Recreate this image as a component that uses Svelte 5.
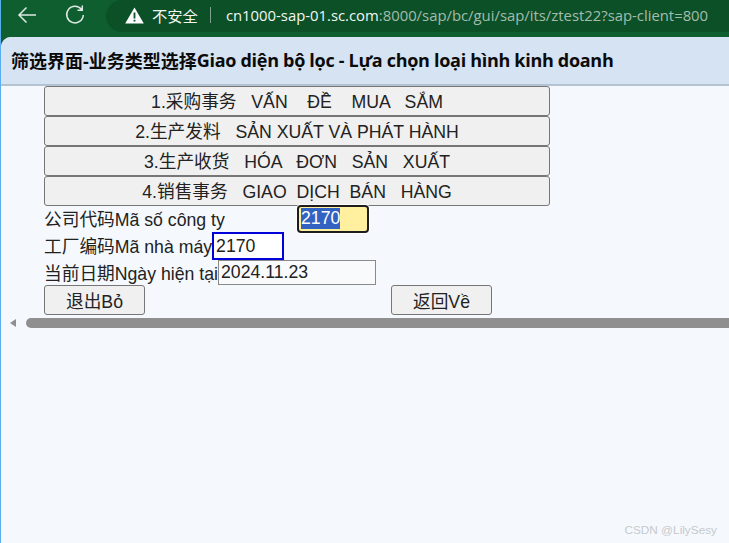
<script>
  const actions = [
    '1.采购事务   VẤN    ĐỀ    MUA   SẮM',
    '2.生产发料   SẢN XUẤT VÀ PHÁT HÀNH',
    '3.生产收货   HÓA   ĐƠN   SẢN   XUẤT',
    '4.销售事务   GIAO  DỊCH  BÁN   HÀNG'
  ];
</script>

<div class="window">
  <header class="toolbar">
    <button class="nav back" aria-label="Back">
      <svg width="22" height="22" viewBox="0 0 22 22"><path d="M20 11H3M10.500 3.500 3 11l7.500 7.500" /></svg>
    </button>
    <button class="nav reload" aria-label="Reload">
      <svg width="22" height="22" viewBox="0 0 22 22"><path d="M17.600 5.500A8.300 8.300 0 1 0 19.300 11M18.300 1.500v4.800h-4.800" /></svg>
    </button>
    <div class="address">
      <svg class="warn" width="19" height="17" viewBox="0 0 19 17">
        <path d="M9.500 .5 18.800 16.500H.2Z" fill="#fff" />
        <path d="M8.600 5.500h1.800v6h-1.800zM8.600 12.700h1.800v1.800h-1.800z" fill="#0c5027" />
      </svg>
      <span class="insecure">不安全</span>
      <span class="sep"></span>
      <span class="url">cn1000-sap-01.sc.com<span class="dim">:8000/sap/bc/gui/sap/its/ztest22?sap-client=800</span></span>
    </div>
  </header>

  <div class="page">
    <h1>筛选界面-业务类型选择<span class="vi">Giao diện bộ lọc - Lựa chọn loại hình kinh doanh</span></h1>

    <main>
      <div class="actions">
        {#each actions as action}
          <button class="action">{action}</button>
        {/each}
      </div>

      <div class="field first">
        <label for="company">公司代码Mã số công ty</label>
        <div id="company" class="focused"><span class="selected">2170</span></div>
      </div>
      <div class="field second">
        <label for="plant">工厂编码Mã nhà máy</label>
        <input id="plant" class="plant" value="2170" />
      </div>
      <div class="field third">
        <label for="date">当前日期Ngày hiện tại</label>
        <input id="date" class="date" value="2024.11.23" />
      </div>

      <div class="footer">
        <button class="small">退出Bỏ</button>
        <button class="small">返回Về</button>
      </div>
    </main>

    <div class="scrollbar">
      <span class="arrow"></span>
      <span class="thumb"></span>
    </div>

    <div class="watermark">CSDN @LilySesy</div>
  </div>
</div>

<style>
  :global(body) {
    margin: 0;
    background: #f5f9fd;
  }

  .window {
    width: 729px;
    height: 543px;
    overflow: hidden;
    display: flex;
    flex-direction: column;
    font-family: "Liberation Sans", "Noto Sans CJK SC", sans-serif;
    background: #0f5e2f;
    border-left: 1px solid #5aaef0;
    box-sizing: border-box;
  }

  .toolbar {
    height: 37px;
    flex: none;
    display: flex;
    align-items: flex-start;
    padding-left: 14px;
  }

  .nav {
    width: 24px;
    height: 30px;
    padding: 0;
    border: 0;
    background: none;
    display: flex;
    align-items: center;
    justify-content: center;
  }

  .nav svg {
    fill: none;
    stroke: #dfe9e3;
    stroke-width: 1.5;
  }

  .reload {
    margin-left: 24px;
  }

  .address {
    margin-left: 19px;
    flex: 1;
    height: 32px;
    background: #0c5027;
    border-radius: 16px 0 0 16px;
    display: flex;
    align-items: center;
    padding: 0 0 2px 19px;
    box-sizing: border-box;
    font-family: "Open Sans", "Noto Sans CJK SC", sans-serif;
    font-size: 14.850px;
    white-space: nowrap;
    color: #f2f6f3;
  }

  .insecure {
    margin-left: 8px;
    font-family: "Noto Sans CJK SC", sans-serif;
    font-size: 15.300px;
  }

  .sep {
    width: 1px;
    height: 16px;
    background: #7fa38d;
    margin: 0 15px 0 12px;
  }

  .dim {
    color: #a3bcad;
  }

  .page {
    flex: 1;
    background: #f5f9fd;
    border-radius: 10px 0 0 0;
    position: relative;
  }

  h1 {
    margin: 0;
    height: 49px;
    padding: 0 0 2px 10px;
    display: flex;
    align-items: center;
    box-sizing: border-box;
    background: #d6e3f2;
    border-bottom: 2px solid #b4c3d2;
    border-radius: 10px 0 0 0;
    font-family: "Open Sans", "Noto Sans CJK SC", sans-serif;
    font-size: 18px;
    font-weight: 700;
    color: #0b0b0b;
    white-space: nowrap;
  }

  .vi {
    letter-spacing: -0.300px;
  }

  main {
    padding: 0 0 0 43px;
    font-size: 17.700px;
    color: #222;
  }

  .actions {
    width: 506px;
    display: flex;
    flex-direction: column;
  }

  .action,
  .small {
    box-sizing: border-box;
    background: #f0f0f0;
    border: 1px solid #767676;
    border-radius: 3px;
    font: inherit;
    color: #222;
    white-space: pre;
  }

  .action {
    height: 30px;
    padding: 0 0 2px;
  }

  .field {
    display: flex;
    align-items: center;
  }

  .field label {
    padding-bottom: 2px;
  }

  .first {
    height: 26px;
  }

  .second {
    height: 28px;
  }

  .third {
    height: 25px;
  }

  .first label {
    width: 253px;
  }

  input,
  .focused {
    box-sizing: border-box;
    font: inherit;
    color: #222;
    margin: 0;
    outline: none;
  }

  .focused {
    width: 72px;
    height: 28px;
    padding: 1px 0 0 2px;
    background: #fff0a0;
    border: 2px solid #1d1d1d;
    border-radius: 4px;
    box-shadow: 0 0 0 1px #fff;
    line-height: 21px;
  }

  .selected {
    display: inline-block;
    background: #3263c2;
    color: #fff;
  }

  .plant {
    width: 72px;
    height: 28px;
    padding: 0 0 0 2px;
    background: #fff;
    border: 2px solid #0000d8;
  }

  .date {
    width: 158px;
    height: 25px;
    padding: 0 0 0 2px;
    background: #f8fafc;
    border: 1px solid #8a8a8a;
  }

  .footer {
    display: flex;
    gap: 246px;
  }

  .small {
    width: 101px;
    height: 30px;
    padding: 0;
  }

  .scrollbar {
    display: flex;
    align-items: center;
    height: 10px;
    margin-top: 3px;
  }

  .arrow {
    margin-left: 9px;
    border-style: solid;
    border-width: 4.500px 6px 4.500px 0;
    border-color: transparent #8f8f8f transparent transparent;
  }

  .thumb {
    flex: 1;
    height: 10px;
    margin-left: 10px;
    background: #8f8f8f;
    border-radius: 5px 0 0 5px;
  }

  .watermark {
    position: absolute;
    right: 12px;
    bottom: 6px;
    font-size: 11.800px;
    color: #c6c9cc;
  }
</style>
